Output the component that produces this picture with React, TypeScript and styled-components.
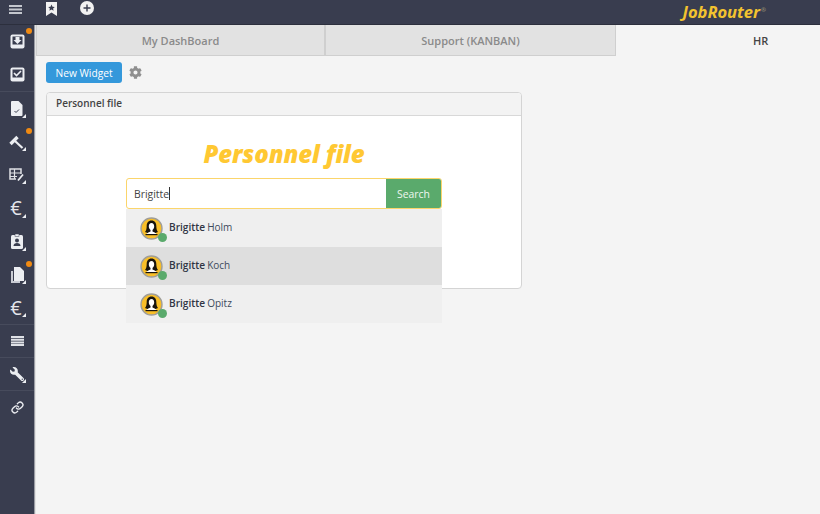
import React from "react";
import styled, { createGlobalStyle } from "styled-components";
import { FaCog, FaWrench } from "react-icons/fa";
import { Link as LinkIcon } from "lucide-react";

const Global = createGlobalStyle`
  html, body { margin: 0; padding: 0; height: 100%; background: #f4f4f4; overflow: hidden; }
  body { font-family: "Open Sans", "Liberation Sans", sans-serif; }
  #root { height: 100%; }
`;

const Page = styled.div`
  width: 820px; height: 514px; display: flex; flex-direction: column; background: #f4f4f4; overflow: hidden;
`;
const TopBar = styled.header`
  height: 24px; flex: none; background: #393d4f; display: flex; align-items: flex-start; color: #eee;
  border-bottom: 1px solid #2c2f3d;
`;
const TopIcon = styled.div<{ $w: number; $top: number }>`
  width: ${p => p.$w}px; flex: none; display: flex; justify-content: center; align-items: flex-start; height: 24px; box-sizing: border-box; padding-top: ${p => p.$top}px; color: #f0f0f0;
`;
const Logo = styled.div`
  margin-left: auto; margin-right: 54px; color: #f3c32f; font-size: 16.500px; line-height: 23px; font-weight: 700; font-style: italic;
  sup { font-size: 6px; color: #8d8a70; font-style: normal; margin-left: 1px; vertical-align: 6px; line-height: 0; }
`;
const Body = styled.div`
  flex: 1; display: flex; min-height: 0;
`;
const Side = styled.nav`
  width: 34px; flex: none; background: #393d4f; border-right: 1px solid #9a9ca4; display: flex; flex-direction: column;
  box-shadow: 1px 0 0 #e2e2e2;
  margin-right: 1px;
`;
const SideItem = styled.div<{ $line?: boolean }>`
  height: 33.300px; flex: none; box-sizing: border-box; position: relative; display: flex; align-items: center; justify-content: center; color: #eceef2;
  ${p => p.$line ? "border-bottom: 1px solid #474b5c;" : ""}
`;
const Dot = styled.span`
  position: absolute; right: 2px; top: 3px; width: 6px; height: 6px; border-radius: 50%; background: #f08a12;
`;
const Caret = styled.span`
  position: absolute; right: 8px; bottom: 7px; width: 0; height: 0; border-style: solid; border-width: 0 0 4px 4px; border-color: transparent transparent #eceef2 transparent;
`;
const Flip = styled.span`
  display: flex; transform: scaleX(-1);
`;
const Euro = styled.span`
  font-size: 20px; line-height: 20px; font-weight: 400; color: #e4e6ec; position: relative; left: -1px;
`;
const Main = styled.main`
  flex: 1; min-width: 0; display: flex; flex-direction: column;
`;
const Tabs = styled.div`
  display: flex; height: 31px; flex: none;
`;
const Tab = styled.div<{ $w: number; $active?: boolean }>`
  width: ${p => p.$w}px; flex: none; box-sizing: border-box; display: flex; align-items: center; justify-content: center;
  font-size: 11px; font-weight: 600; padding-top: 0;
  color: ${p => p.$active ? "#444" : "#8a8a8a"};
  background: ${p => p.$active ? "#f4f4f4" : "#e2e2e2"};
  ${p => p.$active ? "" : "border: 1px solid #cfcfcf; border-top: none;"}
  ${p => p.$active ? "justify-content: flex-start; padding-left: 137px;" : ""}
`;
const Toolbar = styled.div`
  display: flex; align-items: center; gap: 7px; padding: 6px 0 0 10px; height: 21px;
`;
const NewBtn = styled.button`
  height: 21px; width: 76px; border: none; border-radius: 3px; background: #3498db; color: #fff; font: 400 10.200px "Open Sans", sans-serif; padding: 0;
`;
const Gear = styled.span`
  color: #8f8f8f; display: flex; align-items: center;
`;
const Panel = styled.section`
  position: relative; margin: 9px 0 0 10px; width: 476px; height: 197px; box-sizing: border-box; border: 1px solid #d4d4d4; border-radius: 4px; background: #fff;
`;
const PanelHead = styled.div`
  height: 23px; box-sizing: border-box; background: #f3f3f3; border-bottom: 1px solid #d8d8d8; border-radius: 3px 3px 0 0;
  font-size: 10px; font-weight: 600; color: #444; padding: 2px 0 0 9px; line-height: 16px;
`;
const PanelBody = styled.div`
  display: flex; flex-direction: column; align-items: center; padding: 21px 0 0;
`;
const Title = styled.h1`
  margin: 0; font-size: 24px; letter-spacing: -0.150px; line-height: 34px; font-weight: 800; font-style: italic; color: #ffc832;
`;
const SearchWrap = styled.div`
  position: relative; width: 316px; margin-top: 7px;
`;
const SearchRow = styled.div`
  height: 31px; box-sizing: border-box; border: 1px solid #fbd56b; border-radius: 3px; display: flex; background: #fff; overflow: hidden;
`;
const Input = styled.div`
  flex: 1; font-size: 10.400px; color: #444; padding-left: 7px; display: flex; align-items: center;
`;
const Cursor = styled.span`
  width: 1px; height: 13px; background: #333; display: inline-block;
`;
const SearchBtn = styled.div`
  width: 55px; background: #5aaa6c; color: #eef6ef; font-size: 10.400px; display: flex; align-items: center; justify-content: center;
`;
const Dropdown = styled.div`
  position: absolute; left: 0; right: 0; top: 31px;
`;
const Option = styled.div<{ $hover?: boolean }>`
  height: 38px; display: flex; align-items: center; padding: 0 0 0 14px; gap: 6px; background: ${p => p.$hover ? "#dedede" : "#efefef"};
  font-size: 10px; color: #3d4a5c; word-spacing: -0.500px;
  b { font-weight: 600; color: #2f3544; font-size: 10.100px; }
`;
const OptionLabel = styled.span`
  position: relative; top: -1px;
`;
const Avatar = styled.span`
  position: relative; width: 23px; height: 23px; flex: none; display: block;
`;
const Status = styled.span`
  position: absolute; right: -4px; bottom: -2px; width: 9px; height: 9px; border-radius: 50%; background: #5aaa6c;
`;

const Menu = () => (
  <svg width="13" height="9" viewBox="0 0 13 9"><path d="M0 0h13v2H0zM0 3.500h13v2H0zM0 7h13v2H0z" fill="#c4c7ce"/></svg>
);
const List = () => (
  <svg width="13" height="10" viewBox="0 0 13 10"><path d="M0 0h13v2H0zM0 2.700h13v2H0zM0 5.400h13v2H0zM0 8.100h13V10H0z" fill="#dfe1e6"/></svg>
);
const Inbox = () => (
  <svg width="15" height="15" viewBox="0 0 15 15"><rect x="0.500" y="0.500" width="14" height="14" rx="2" fill="#eceef2"/><rect x="2.500" y="2.500" width="10" height="8" fill="#393d4f"/><path d="M5.500 3h4v3h2l-4 4-4-4h2z" fill="#eceef2"/></svg>
);
const CheckBox = () => (
  <svg width="15" height="15" viewBox="0 0 15 15"><rect x="0.500" y="0.500" width="14" height="14" rx="2" fill="#eceef2"/><rect x="2.500" y="2.500" width="10" height="8" fill="#393d4f"/><path d="M4 6l2.500 2.500L11 4" fill="none" stroke="#eceef2" strokeWidth="1.600"/></svg>
);
const Doc = () => (
  <svg width="12" height="15" viewBox="0 0 12 15"><path d="M1 0h6.500L11.500 4v10a1 1 0 0 1-1 1H1a1 1 0 0 1-1-1V1a1 1 0 0 1 1-1z" fill="#eceef2"/><path d="M3.500 10l1.500 1.500L8 8.500" fill="none" stroke="#393d4f" strokeWidth="1"/></svg>
);
const Hammer = () => (
  <svg width="16" height="14" viewBox="0 0 16 14"><path d="M1.500 9L8.500 2" stroke="#eceef2" strokeWidth="3.400" fill="none"/><path d="M6 6l7.500 7" stroke="#eceef2" strokeWidth="2.200" fill="none"/></svg>
);
const TableEdit = () => (
  <svg width="16" height="14" viewBox="0 0 16 14"><path d="M7 11H1V1h11v5" fill="none" stroke="#dfe1e6" strokeWidth="1.500"/><path d="M1 5h11M1 8.500h7M5.500 1v10" stroke="#dfe1e6" strokeWidth="1.200"/><path d="M9 12.500l5-6" stroke="#eceef2" strokeWidth="1.800"/></svg>
);
const IdBadge = () => (
  <svg width="12" height="15" viewBox="0 0 12 15"><rect width="12" height="14" y="1" rx="1.500" fill="#eceef2"/><rect x="4" y="0" width="4" height="2.500" fill="#eceef2" stroke="#393d4f" strokeWidth=".5"/><circle cx="6" cy="6.500" r="2" fill="#393d4f"/><path d="M2.500 12c0-2 1.500-3 3.500-3s3.500 1 3.500 3z" fill="#393d4f"/></svg>
);
const Docs = () => (
  <svg width="15" height="16" viewBox="0 0 15 16"><path d="M1 4h2v10h7v2H1z" fill="#c9ccd4"/><path d="M4 0h6l4 4v10H4z" fill="#eceef2"/></svg>
);
const Bookmark = () => (
  <svg width="11" height="14" viewBox="0 0 11 14"><path d="M0 0h11v14L5.500 10.500 0 14z" fill="#f2f2f2"/><path d="M5.500 2.500l1 2.200 2.300.2-1.700 1.600.5 2.300-2.100-1.200-2.100 1.200.5-2.300L2.200 4.900l2.300-.2z" fill="#393d4f"/></svg>
);
const PlusCircle = () => (
  <svg width="14" height="14" viewBox="0 0 14 14"><circle cx="7" cy="7" r="7" fill="#f2f2f2"/><path d="M7 3.500v7M3.500 7h7" stroke="#393d4f" strokeWidth="1.400"/></svg>
);
const Person = () => (
  <svg width="23" height="23" viewBox="0 0 23 23">
    <circle cx="11.500" cy="11.500" r="10.500" fill="#f9bf28" stroke="#a09e98" strokeWidth="1.400"/>
    <path d="M11.500 3.500c-3.200 0-4.800 2.400-4.800 5.500 0 2.800-.7 5-1.700 6l2.500 1h8l2.500-1c-1-1-1.700-3.200-1.700-6 0-3.100-1.600-5.500-4.800-5.500z" fill="#17140e"/>
    <path d="M11.500 6c-1.700 0-2.700 1.500-2.700 3.300 0 1.700.8 3 1.700 3.700v1.400c-1.500.6-3 1.100-4 2.600h10c-1-1.500-2.500-2-4-2.600V13c.9-.7 1.700-2 1.700-3.700C14.200 7.500 13.200 6 11.500 6z" fill="#fff"/>
    <rect x="5.500" y="17" width="12" height="1.200" fill="#17140e"/>
  </svg>
);

const people = [
  { last: "Holm" }, { last: "Koch", hover: true }, { last: "Opitz" },
];

export default function App() {
  return (
    <Page>
      <Global />
      <TopBar>
        <TopIcon $w={31} $top={5}><Menu /></TopIcon>
        <TopIcon $w={40} $top={2}><Bookmark /></TopIcon>
        <TopIcon $w={32} $top={1}><PlusCircle /></TopIcon>
        <Logo>JobRouter<sup>®</sup></Logo>
      </TopBar>
      <Body>
        <Side>
          <SideItem><Inbox /><Dot /></SideItem>
          <SideItem $line><CheckBox /></SideItem>
          <SideItem><Doc /><Caret /></SideItem>
          <SideItem><Hammer /><Dot /><Caret /></SideItem>
          <SideItem><TableEdit /><Caret /></SideItem>
          <SideItem><Euro>€</Euro><Caret /></SideItem>
          <SideItem><IdBadge /><Caret /></SideItem>
          <SideItem><Docs /><Dot /><Caret /></SideItem>
          <SideItem $line><Euro>€</Euro><Caret /></SideItem>
          <SideItem $line><List /></SideItem>
          <SideItem $line><Flip><FaWrench size={14} /></Flip><Caret /></SideItem>
          <SideItem><LinkIcon size={13} strokeWidth={2.500} /></SideItem>
        </Side>
        <Main>
          <Tabs>
            <Tab $w={289}>My DashBoard</Tab>
            <Tab $w={291}>Support (KANBAN)</Tab>
            <Tab $w={204} $active>HR</Tab>
          </Tabs>
          <Toolbar>
            <NewBtn>New Widget</NewBtn>
            <Gear><FaCog size={13} /></Gear>
          </Toolbar>
          <Panel>
            <PanelHead>Personnel file</PanelHead>
            <PanelBody>
              <Title>Personnel file</Title>
              <SearchWrap>
                <SearchRow>
                  <Input>Brigitte<Cursor /></Input>
                  <SearchBtn>Search</SearchBtn>
                </SearchRow>
                <Dropdown>
                  {people.map(p => (
                    <Option key={p.last} $hover={p.hover}>
                      <Avatar><Person /><Status /></Avatar>
                      <OptionLabel><b>Brigitte</b> {p.last}</OptionLabel>
                    </Option>
                  ))}
                </Dropdown>
              </SearchWrap>
            </PanelBody>
          </Panel>
        </Main>
      </Body>
    </Page>
  );
}
